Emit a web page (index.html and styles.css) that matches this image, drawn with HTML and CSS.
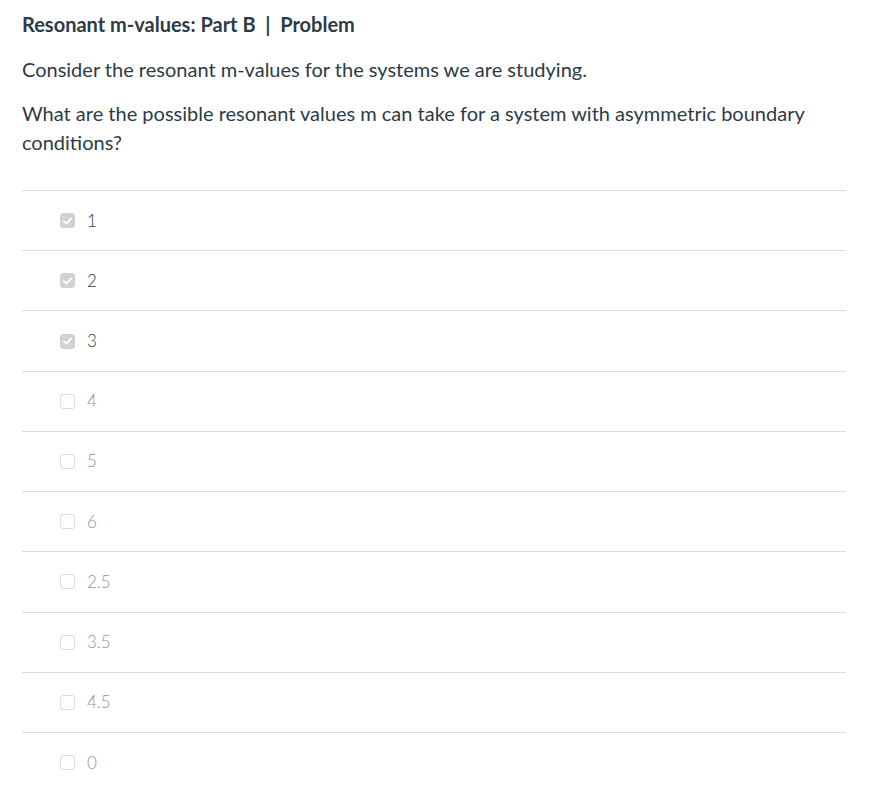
FILE: index.html
```html
<!DOCTYPE html>
<html lang="en">
<head>
<meta charset="utf-8">
<title>Resonant m-values: Part B | Problem</title>
<link rel="stylesheet" href="styles.css">
</head>
<body>
<main class="page">
  <h1 class="title">Resonant m-values: Part B &nbsp;|&nbsp; Problem</h1>
  <p class="text">Consider the resonant m-values for the systems we are studying.</p>
  <p class="text">What are the possible resonant values m can take for a system with asymmetric boundary conditions?</p>
  <ul class="options">
    <li class="option checked"><span class="box"><svg viewBox="0 0 14 14" width="14" height="14"><path d="M3.2 7.3 L5.9 9.9 L10.9 4.3" fill="none" stroke="#fff" stroke-width="2" stroke-linecap="round" stroke-linejoin="round"/></svg></span><span class="label">1</span></li>
    <li class="option checked"><span class="box"><svg viewBox="0 0 14 14" width="14" height="14"><path d="M3.2 7.3 L5.9 9.9 L10.9 4.3" fill="none" stroke="#fff" stroke-width="2" stroke-linecap="round" stroke-linejoin="round"/></svg></span><span class="label">2</span></li>
    <li class="option checked"><span class="box"><svg viewBox="0 0 14 14" width="14" height="14"><path d="M3.2 7.3 L5.9 9.9 L10.9 4.3" fill="none" stroke="#fff" stroke-width="2" stroke-linecap="round" stroke-linejoin="round"/></svg></span><span class="label">3</span></li>
    <li class="option"><span class="box"></span><span class="label">4</span></li>
    <li class="option"><span class="box"></span><span class="label">5</span></li>
    <li class="option"><span class="box"></span><span class="label">6</span></li>
    <li class="option"><span class="box"></span><span class="label">2.5</span></li>
    <li class="option"><span class="box"></span><span class="label">3.5</span></li>
    <li class="option"><span class="box"></span><span class="label">4.5</span></li>
    <li class="option"><span class="box"></span><span class="label">0</span></li>
  </ul>
</main>
</body>
</html>
```

FILE: styles.css
```css
html, body {
  margin: 0;
  padding: 0;
  background: #fff;
}

body {
  font-family: Lato, "Noto Sans", sans-serif;
  color: #2d3b45;
}

.page {
  padding: 10px 25px 0 22px;
  width: 824px;
}

.title {
  font-size: 20px;
  font-weight: 700;
  line-height: 28px;
  margin: 0 0 17px;
}

.text {
  font-size: 20px;
  line-height: 29px;
  margin: 0 0 15px;
}

.options {
  list-style: none;
  margin: 33px 0 0;
  padding: 0;
}

.option {
  box-sizing: border-box;
  height: 60.22px;
  border-top: 1px solid #dcdcdc;
  display: flex;
  align-items: center;
  padding-left: 38px;
  gap: 12px;
  font-size: 17px;
  font-weight: 300;
  color: #8b969e;
}

.option.checked {
  color: #2d3b45;
}

.box {
  box-sizing: border-box;
  width: 15px;
  height: 15px;
  border-radius: 3px;
  border: 1px solid #dcdcdc;
  background: #fff;
  display: flex;
  align-items: center;
  justify-content: center;
}

.option.checked .box {
  background: #d2d2d2;
  border-color: #d2d2d2;
}

.box svg {
  display: block;
}

.label {
  line-height: 20px;
}
```
